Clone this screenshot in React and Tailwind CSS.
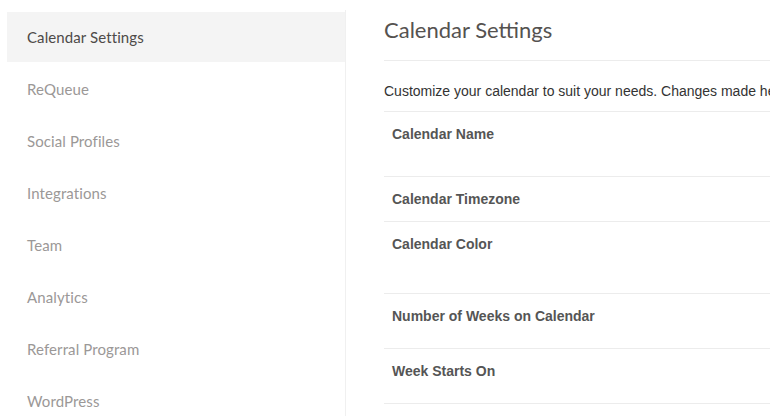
import React from "react";

const navItems = [
  "Calendar Settings",
  "ReQueue",
  "Social Profiles",
  "Integrations",
  "Team",
  "Analytics",
  "Referral Program",
  "WordPress",
];

// label rows with the heights of the form controls they hold
const rows = [
  { label: "Calendar Name", h: "h-[64px]" },
  { label: "Calendar Timezone", h: "h-[44px]" },
  { label: "Calendar Color", h: "h-[71px]" },
  { label: "Number of Weeks on Calendar", h: "h-[54px]" },
  { label: "Week Starts On", h: "h-[54px]" },
];

export default function App() {
  return (
    <div className="flex h-[416px] w-[770px] overflow-hidden bg-white">
      <aside className="ml-[7px] mt-[10px] w-[339px] shrink-0 border-r border-[#f0f0f0] pt-[2px]">
        {navItems.map((item, i) => (
          <div
            key={item}
            className={`mb-[2px] flex h-[50px] items-center pl-[20px] text-[15px] tracking-[0.1px] ${
              i === 0 ? "bg-[#f4f4f4] text-[#4d4a48]" : "text-[#9b9897]"
            }`}
            style={{ fontFamily: "Lato, 'Open Sans', sans-serif" }}
          >
            {item}
          </div>
        ))}
      </aside>

      <main className="min-w-0 flex-1 overflow-hidden pl-[38px]">
        <h1
          className="flex h-[61px] items-center border-b border-[#ececec] pb-[1px] text-[22px] text-[#555250]"
          style={{ fontFamily: "Lato, 'Open Sans', sans-serif" }}
        >
          Calendar Settings
        </h1>
        <div className="font-['Liberation_Sans',Arial,sans-serif]">
          <p className="h-[51px] overflow-hidden whitespace-nowrap border-b border-[#ececec] pt-[22px] text-[14px] leading-4 text-[#333]">
            Customize your calendar to suit your needs. Changes made here will apply to every post.
          </p>
          {rows.map((r) => (
            <div key={r.label} className={`${r.h} box-content border-b border-[#ececec] pl-[8px]`}>
              <div className="pt-[14px] text-[14px] font-bold leading-4 text-[#555]">{r.label}</div>
            </div>
          ))}
        </div>
      </main>
    </div>
  );
}
